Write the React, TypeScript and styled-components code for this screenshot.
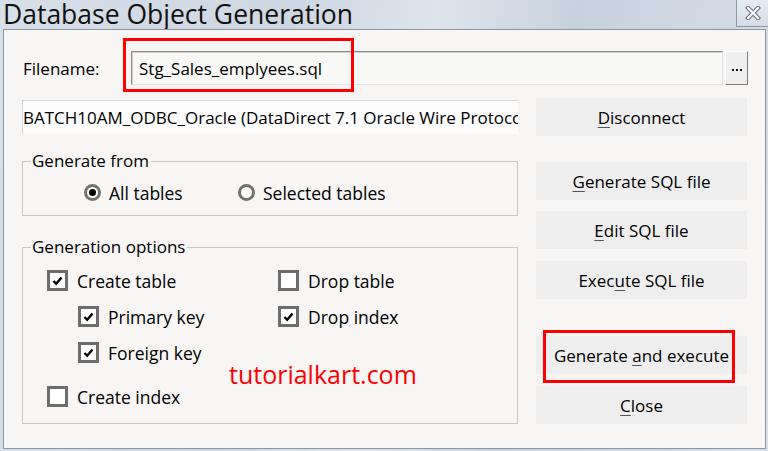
import React from "react";
import styled, { createGlobalStyle } from "styled-components";

const FONT = `"Open Sans", "Noto Sans", "DejaVu Sans", sans-serif`;

const Global = createGlobalStyle`
  html, body { margin: 0; padding: 0; background: #d3dce7; }
  #root { width: 768px; height: 451px; }
  * { box-sizing: border-box; }
`;

const Frame = styled.div`
  width: 768px;
  height: 451px;
  display: flex;
  flex-direction: column;
  background: linear-gradient(100deg, #d7dfe9 0%, #cdd7e2 35%, #dde4ec 52%, #c8d2de 68%, #d6dee8 100%);
  font-family: ${FONT};
  color: #000;
  overflow: hidden;
`;

const TitleBar = styled.div`
  height: 29px;
  flex: none;
  display: flex;
  align-items: flex-start;
  justify-content: space-between;
`;

const Title = styled.div`
  font-size: 26.5px;
  line-height: 29px;
  height: 29px;
  padding-left: 3px;
  color: #111;
  white-space: nowrap;
`;

const CloseBox = styled.div`
  width: 32px;
  height: 27px;
  border-left: 1px solid #8f9aa7;
  border-bottom: 1px solid #8f9aa7;
  background: linear-gradient(#e8edf3, #d5dce6);
  display: flex;
  align-items: center;
  justify-content: center;
`;

const Panel = styled.div`
  flex: 1;
  margin: 0 2px 2px 3px;
  border: 1px solid #8c97a4;
  background: #f7f6f4;
  padding: 21px 17px 0 18px;
  font-size: 17px;
`;

const FileRow = styled.div`
  display: flex;
  align-items: center;
  height: 34px;
`;

const Label = styled.div`
  width: 109px;
  padding-left: 1px;
`;

const FileInput = styled.div`
  position: relative;
  width: 592px;
  height: 34px;
  border: 1px solid;
  border-color: #8a8a8a #e2e2e2 #e2e2e2 #8a8a8a;
  box-shadow: inset 1px 1px 0 #d4d4d4;
  background: #f9f9f8;
  padding-left: 7px;
  display: flex;
  align-items: center;
`;

const Browse = styled.div`
  margin-left: 2px;
  width: 23px;
  height: 34px;
  border: 1px solid;
  border-color: #ffffff #7c7c7c #7c7c7c #ffffff;
  background: #efefef;
  display: flex;
  align-items: center;
  justify-content: center;
  gap: 2px;
  padding-top: 4px;
`;

const BrowseDot = styled.span`
  width: 2px;
  height: 2px;
  background: #111;
`;

const Annotation = styled.div<{ $l: number; $t: number; $w: number; $h: number }>`
  position: absolute;
  left: ${(p) => p.$l}px;
  top: ${(p) => p.$t}px;
  width: ${(p) => p.$w}px;
  height: ${(p) => p.$h}px;
  border: 3px solid #ff0000;
  pointer-events: none;
`;

const Columns = styled.div`
  margin-top: 13px;
  display: grid;
  grid-template-columns: 496px 211px;
  column-gap: 18px;
  align-items: start;
`;

const LeftCol = styled.div`
  display: flex;
  flex-direction: column;
`;

const ConnBox = styled.div`
  margin-top: 2px;
  height: 34px;
  border-top: 1px solid #d9d9d9;
  border-left: 1px solid #d9d9d9;
  background: #fdfdfd;
  display: flex;
  align-items: center;
  white-space: nowrap;
  overflow: hidden;
`;

const GroupBox = styled.fieldset<{ $mt: number; $h: number; $pt: number }>`
  margin: ${(p) => p.$mt}px 0 0 0;
  height: ${(p) => p.$h}px;
  padding: ${(p) => p.$pt}px 0 0 0;
  border: 1px solid #c8c8c8;
  min-width: 0;
`;

const Legend = styled.legend`
  margin-left: 8px;
  padding: 0 2px 0 1px;
  line-height: 20px;
  font-size: 17px;
`;

const RadioRow = styled.div`
  display: grid;
  grid-template-columns: 154px auto;
  padding-left: 61px;
`;

const Option = styled.div<{ $indent?: number; $mt?: number }>`
  display: flex;
  align-items: center;
  height: 21px;
  font-size: 17.5px;
  margin-left: ${(p) => p.$indent ?? 0}px;
  margin-top: ${(p) => p.$mt ?? 0}px;
  white-space: nowrap;
`;

const RadioCircle = styled.span`
  width: 17px;
  height: 17px;
  border-radius: 50%;
  border: 3px solid #727272;
  background: #fff;
  display: flex;
  align-items: center;
  justify-content: center;
  margin-right: 8px;
  flex: none;
`;

const Dot = styled.span`
  width: 7px;
  height: 7px;
  border-radius: 50%;
  background: #000;
`;

const CheckBox = styled.span`
  width: 21px;
  height: 21px;
  border: 3px solid #6d6d6d;
  background: #fff;
  display: flex;
  align-items: center;
  justify-content: center;
  margin-right: 9px;
  flex: none;
`;

const OptionsGrid = styled.div`
  position: relative;
  display: grid;
  grid-template-columns: 231px auto;
  row-gap: 15px;
  padding-left: 24px;
`;

const Watermark = styled.div`
  position: absolute;
  left: 206px;
  top: 89px;
  font-size: 25px;
  line-height: 30px;
  color: #ff0000;
  white-space: nowrap;
`;

const RightCol = styled.div`
  display: flex;
  flex-direction: column;
`;

const ButtonWrap = styled.div<{ $mt: number }>`
  position: relative;
  margin-top: ${(p) => p.$mt}px;
`;

const Button = styled.div`
  height: 38px;
  background: #eeeeee;
  display: flex;
  align-items: center;
  justify-content: center;
  white-space: pre;
  u {
    text-decoration-color: #555;
    text-underline-offset: 3px;
  }
`;

const Check = () => (
  <svg width="11" height="10" viewBox="0 0 11 10">
    <path d="M1.5 5 L4.2 7.8 L9.5 1.5" fill="none" stroke="#000" strokeWidth="2.4" />
  </svg>
);

const CB = ({ checked, label, indent, mt, col }: { checked: boolean; label: string; indent?: number; mt?: number; col?: number }) => (
  <Option $indent={indent} $mt={mt} style={col ? { gridColumn: col } : undefined}>
    <CheckBox>{checked && <Check />}</CheckBox>
    {label}
  </Option>
);

const Radio = ({ checked, label }: { checked: boolean; label: string }) => (
  <Option>
    <RadioCircle>{checked && <Dot />}</RadioCircle>
    {label}
  </Option>
);

export default function App() {
  return (
    <>
      <Global />
      <Frame>
        <TitleBar>
          <Title>Database Object Generation</Title>
          <CloseBox>
            <svg width="16" height="14" viewBox="0 0 16 14">
              <path d="M3 2 L13 12 M13 2 L3 12" stroke="#6f7680" strokeWidth="4.4" strokeLinecap="square" fill="none" />
              <path d="M3 2 L13 12 M13 2 L3 12" stroke="#ffffff" strokeWidth="2" strokeLinecap="square" fill="none" />
            </svg>
          </CloseBox>
        </TitleBar>
        <Panel>
          <FileRow>
            <Label>Filename:</Label>
            <FileInput>
              Stg_Sales_emplyees.sql
              <Annotation $l={-9} $t={-14} $w={231} $h={54} />
            </FileInput>
            <Browse>
              <BrowseDot />
              <BrowseDot />
              <BrowseDot />
            </Browse>
          </FileRow>
          <Columns>
            <LeftCol>
              <ConnBox>BATCH10AM_ODBC_Oracle (DataDirect 7.1 Oracle Wire Protocol)</ConnBox>
              <GroupBox $mt={17} $h={65} $pt={11}>
                <Legend>Generate from</Legend>
                <RadioRow>
                  <Radio checked label="All tables" />
                  <Radio checked={false} label="Selected tables" />
                </RadioRow>
              </GroupBox>
              <GroupBox $mt={21} $h={187} $pt={13}>
                <Legend>Generation options</Legend>
                <OptionsGrid>
                  <CB checked label="Create table" />
                  <CB checked={false} label="Drop table" />
                  <CB checked label="Primary key" indent={31} />
                  <CB checked label="Drop index" />
                  <CB checked label="Foreign key" indent={31} col={1} />
                  <CB checked={false} label="Create index" mt={8} col={1} />
                  <Watermark>tutorialkart.com</Watermark>
                </OptionsGrid>
              </GroupBox>
            </LeftCol>
            <RightCol>
              <ButtonWrap $mt={0}>
                <Button><span><u>D</u>isconnect</span></Button>
              </ButtonWrap>
              <ButtonWrap $mt={26}>
                <Button><span><u>G</u>enerate SQL file</span></Button>
              </ButtonWrap>
              <ButtonWrap $mt={11}>
                <Button><span><u>E</u>dit SQL file</span></Button>
              </ButtonWrap>
              <ButtonWrap $mt={12}>
                <Button><span>Exec<u>u</u>te SQL file</span></Button>
              </ButtonWrap>
              <ButtonWrap $mt={37}>
                <Button><span>Generate <u>a</u>nd execute</span></Button>
                <Annotation $l={7} $t={-6} $w={192} $h={53} />
              </ButtonWrap>
              <ButtonWrap $mt={12}>
                <Button><span><u>C</u>lose</span></Button>
              </ButtonWrap>
            </RightCol>
          </Columns>
        </Panel>
      </Frame>
    </>
  );
}
